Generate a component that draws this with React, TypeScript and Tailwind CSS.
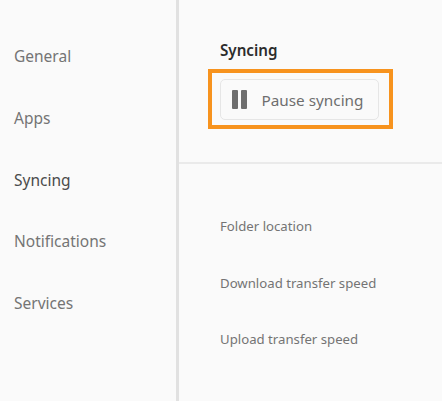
const navItems = [
  { label: 'General', active: false },
  { label: 'Apps', active: false },
  { label: 'Syncing', active: true },
  { label: 'Notifications', active: false },
  { label: 'Services', active: false },
];

const settings = ['Folder location', 'Download transfer speed', 'Upload transfer speed'];

export default function App() {
  return (
    <div className="flex h-[401px] w-[442px] overflow-hidden bg-[#fafafa] font-['Noto_Sans',sans-serif]">
      {/* Sidebar */}
      <nav className="flex w-[179px] shrink-0 flex-col gap-[39.75px] border-r-[3px] border-[#e1e1e1] pl-[14px] pt-[45px]">
        {navItems.map((item) => (
          <div
            key={item.label}
            className={`h-[22px] text-[15.5px] leading-[22px] ${item.active ? 'text-[#4b4b4b]' : 'text-[#747474]'}`}
          >
            {item.label}
          </div>
        ))}
      </nav>

      <main className="flex min-w-0 flex-1 flex-col">
        {/* Sync section */}
        <section className="h-[164px] border-b-2 border-[#eaeaea] pl-[41px] pt-[41px]">
          <h2 className="h-[19px] text-[15.2px] font-semibold leading-[19px] text-[#2c2c2c]">Syncing</h2>
          <div className="ml-[-12px] mt-[9px] inline-flex border-4 border-[#f7931e] pb-[5px] pl-[8px] pr-[10px] pt-[6px]">
            <button className="flex h-[41px] w-[159px] items-center rounded-[5px] border border-[#e6e6e6] pl-[11px]">
              <svg width="15" height="19" viewBox="0 0 15 19" className="shrink-0">
                <rect x="0" y="0" width="6" height="19" rx="1" fill="#6e6e6e" />
                <rect x="9" y="0" width="6" height="19" rx="1" fill="#6e6e6e" />
              </svg>
              <span className="ml-[14.5px] text-[15.3px] leading-[20px] text-[#6e6e6e]">Pause syncing</span>
            </button>
          </div>
        </section>

        {/* Sync settings */}
        <section className="flex flex-col gap-[37.5px] pl-[41px] pt-[53px]">
          {settings.map((label) => (
            <div key={label} className="h-[19px] text-[13.2px] leading-[19px] text-[#747474]">
              {label}
            </div>
          ))}
        </section>
      </main>
    </div>
  );
}
